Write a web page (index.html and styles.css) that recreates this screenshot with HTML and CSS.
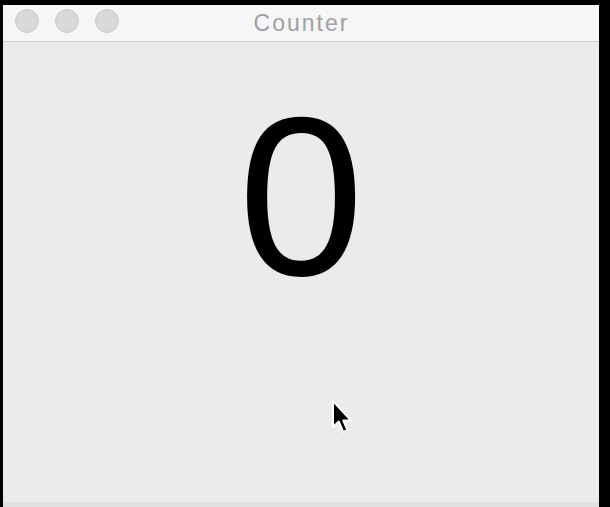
FILE: index.html
```html
<!DOCTYPE html>
<html>
<head>
<meta charset="utf-8">
<link rel="stylesheet" href="styles.css">
</head>
<body>
<div class="window">
  <div class="titlebar">
    <div class="lights">
      <span class="light"></span>
      <span class="light"></span>
      <span class="light"></span>
    </div>
    <div class="title">Counter</div>
    <div></div>
  </div>
  <div class="content">
    <div class="count">0</div>
  </div>
  <div class="bottom"></div>
</div>
<svg class="cursor" width="24" height="37" viewBox="0 0 24 37">
  <path d="M2 2 L2 28 L7.8 22.6 L12.2 33 L16.4 31.1 L12.3 21.6 L20 21.6 Z" fill="#000" stroke="#fff" stroke-width="2" stroke-linejoin="round"/>
</svg>
</body>
</html>
```
FILE: styles.css
```css
html, body {
  margin: 0;
  padding: 0;
  background: #000;
  height: 100%;
  overflow: hidden;
}
body {
  padding: 5px 0 0 3px;
  box-sizing: border-box;
}
.window {
  width: 596px;
  height: 502px;
  display: flex;
  flex-direction: column;
  background: #ebebeb;
}
.titlebar {
  height: 36px;
  border-bottom: 1px solid #cdcdcd;
  background: #f6f5f7;
  display: grid;
  grid-template-columns: 1fr auto 1fr;
  flex: none;
}
.lights {
  display: flex;
  gap: 16px;
  padding: 4px 0 0 12px;
  align-items: flex-start;
}
.light {
  width: 22px;
  height: 22px;
  border-radius: 50%;
  background: #d8d8d8;
  border: 1px solid #cbcbcb;
}
.title {
  font-family: "Liberation Sans", Arial, sans-serif;
  font-size: 23px;
  line-height: 36px;
  letter-spacing: 2px;
  color: #a0a0a0;
  padding-left: 1px;
}
.content {
  flex: 1;
  display: flex;
  justify-content: center;
  padding-top: 42px;
}
.count {
  font-family: "Liberation Sans", Arial, sans-serif;
  font-size: 226px;
  line-height: 226px;
  color: #000;
  height: 226px;
}
.bottom {
  height: 5px;
  background: #e0e0e0;
  flex: none;
}
.cursor {
  position: absolute;
  left: 331px;
  top: 399px;
}
```
